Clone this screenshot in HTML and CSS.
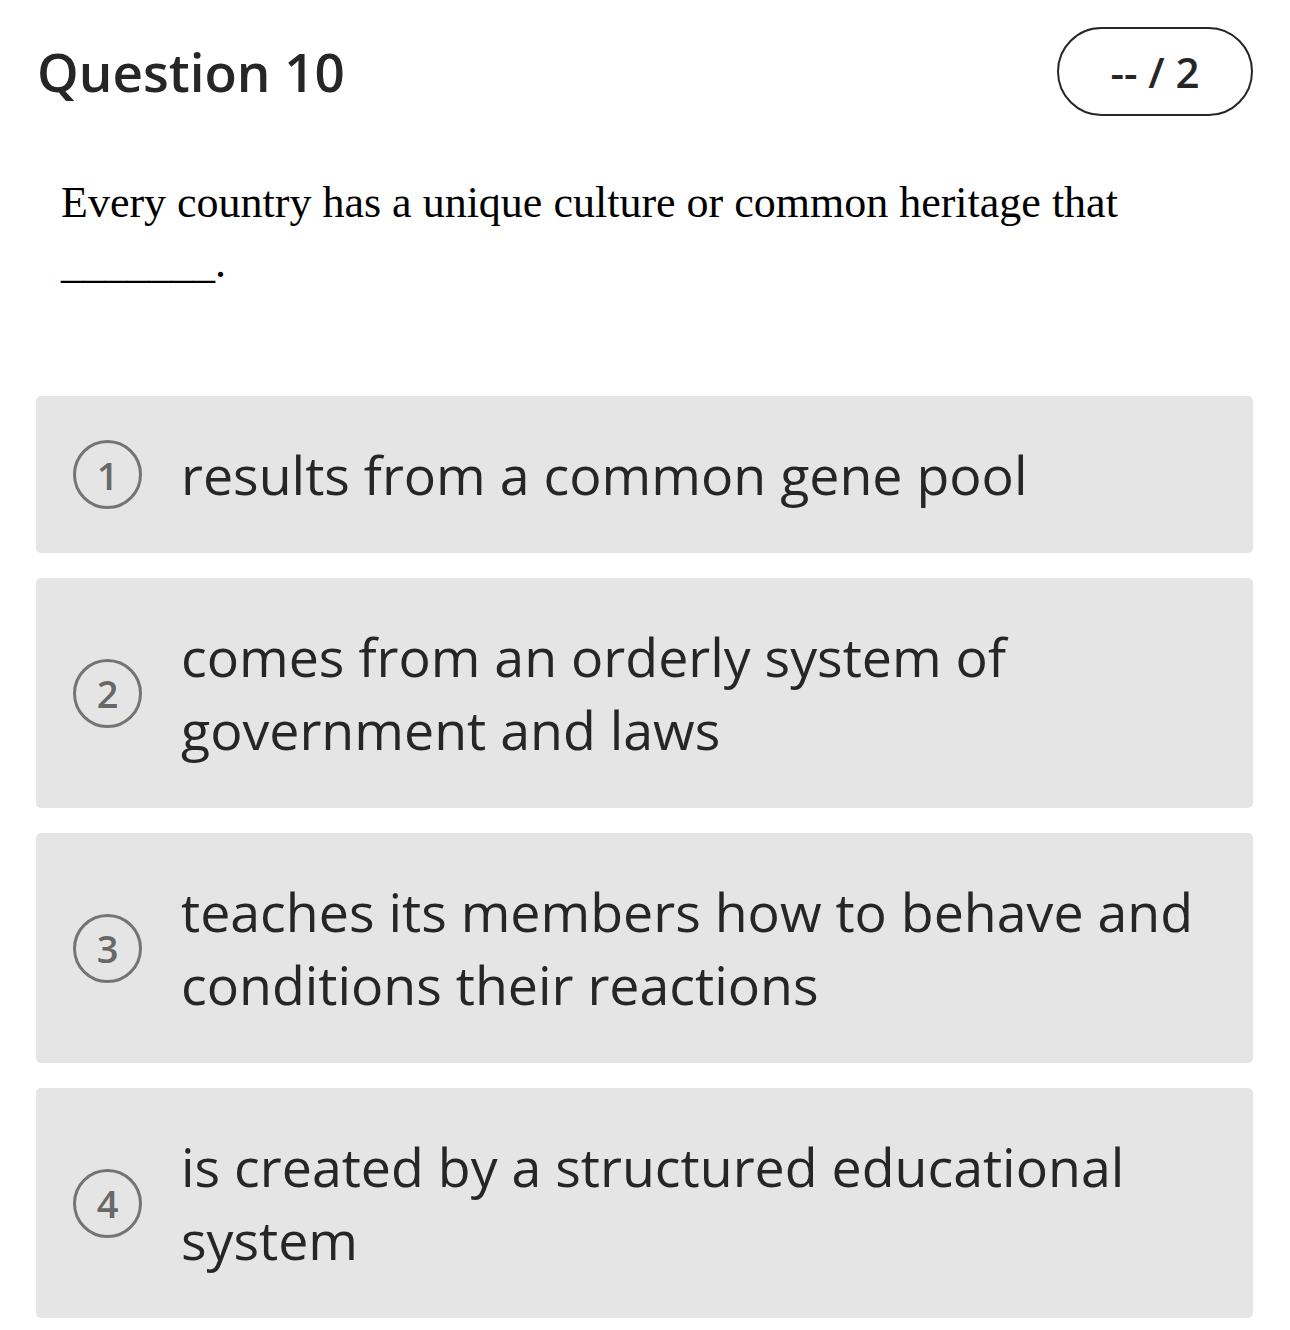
FILE: index.html
```html
<!DOCTYPE html>
<html lang="en">
<head>
<meta charset="utf-8">
<link rel="stylesheet" href="styles.css">
</head>
<body>
<div class="page">
  <header class="head">
    <h1 class="title">Question 10</h1>
    <div class="score">-- / 2</div>
  </header>
  <div class="stem">Every country has a unique culture or common heritage that _______.</div>
  <div class="options">
    <div class="opt"><span class="num">1</span><span class="txt">results from a common gene pool</span></div>
    <div class="opt"><span class="num">2</span><span class="txt">comes from an orderly system of government and laws</span></div>
    <div class="opt"><span class="num">3</span><span class="txt">teaches its members how to behave and conditions their reactions</span></div>
    <div class="opt"><span class="num">4</span><span class="txt">is created by a structured educational system</span></div>
  </div>
</div>
</body>
</html>
```

FILE: styles.css
```css
html, body { margin: 0; padding: 0; background: #fff; }
.page {
  padding: 27px 37px 0 36px;
  font-family: "Open Sans", "Liberation Sans", sans-serif;
  color: #262626;
}
.head {
  display: flex;
  justify-content: space-between;
  align-items: center;
}
.title {
  margin: 0 0 0 1px;
  font-size: 53px;
  font-weight: 600;
  line-height: 68px;
  color: #262626;
}
.score {
  box-sizing: border-box;
  width: 196px;
  height: 89px;
  border: 2px solid #262626;
  border-radius: 45px;
  display: flex;
  align-items: center;
  justify-content: center;
  font-size: 42px;
  font-weight: 600;
  color: #262626;
}
.stem {
  margin: 57px 0 0 25px;
  width: 1100px;
  font-family: "Liberation Serif", "Times New Roman", serif;
  font-size: 44px;
  line-height: 60px;
  color: #000;
}
.options {
  margin-top: 103px;
  display: flex;
  flex-direction: column;
  gap: 25px;
}
.opt {
  background: #e5e5e5;
  border-radius: 5px;
  padding: 42px 40px 42px 37px;
  display: flex;
  align-items: center;
  gap: 39px;
}
.num {
  flex: none;
  box-sizing: border-box;
  width: 69px;
  height: 69px;
  border: 3px solid #747474;
  border-radius: 50%;
  display: flex;
  align-items: center;
  justify-content: center;
  font-size: 38px;
  font-weight: 600;
  color: #686868;
}
.txt {
  font-size: 53.7px;
  line-height: 73px;
  color: #262626;
}
```
